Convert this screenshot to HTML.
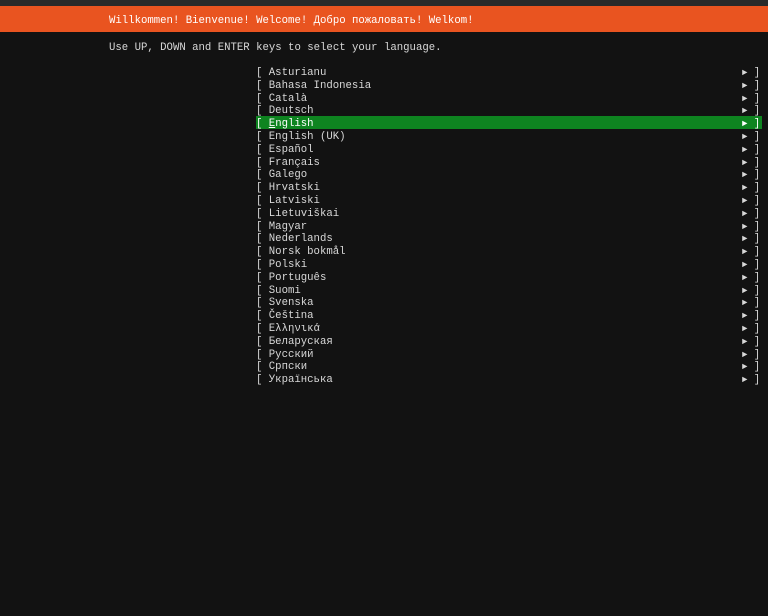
<!DOCTYPE html>
<html><head><meta charset="utf-8"><style>
html,body{margin:0;padding:0;width:768px;height:616px;background:#121212;overflow:hidden}
body{position:relative;font-family:"Liberation Mono","DejaVu Sans Mono",monospace;font-size:10.67px;line-height:12.8px;color:#d8d8d8}
.top{position:absolute;left:0;top:0;width:768px;height:6px;background:#2a2a2a}
.bar{position:absolute;left:0;top:6px;width:768px;height:26px;background:#e95420;color:#fff}
.bar span{position:absolute;left:109px;top:9px;white-space:pre}
.t{position:absolute;white-space:pre}
.list{position:absolute;left:256px;top:65px;width:506px}
.row{position:relative;height:12.8px;white-space:pre;padding-top:0}
.row .in{position:relative;top:2px}
.row .r{position:absolute;left:486px;top:2px}
.row .r b{font-weight:normal;font-size:9px}
.sel{background:#0e8420;color:#fff}
</style></head><body>
<div class="top"></div>
<div class="bar"><span>Willkommen! Bienvenue! Welcome! Добро пожаловать! Welkom!</span></div>
<div class="t" style="left:109px;top:41.5px">Use UP, DOWN and ENTER keys to select your language.</div>
<div class="list">
<div class="row"><span class="in">[ Asturianu</span><span class="r"><b>►</b> ]</span></div>
<div class="row"><span class="in">[ Bahasa Indonesia</span><span class="r"><b>►</b> ]</span></div>
<div class="row"><span class="in">[ Català</span><span class="r"><b>►</b> ]</span></div>
<div class="row"><span class="in">[ Deutsch</span><span class="r"><b>►</b> ]</span></div>
<div class="row sel"><span class="in">[ <u>E</u>nglish</span><span class="r"><b>►</b> ]</span></div>
<div class="row"><span class="in">[ English (UK)</span><span class="r"><b>►</b> ]</span></div>
<div class="row"><span class="in">[ Español</span><span class="r"><b>►</b> ]</span></div>
<div class="row"><span class="in">[ Français</span><span class="r"><b>►</b> ]</span></div>
<div class="row"><span class="in">[ Galego</span><span class="r"><b>►</b> ]</span></div>
<div class="row"><span class="in">[ Hrvatski</span><span class="r"><b>►</b> ]</span></div>
<div class="row"><span class="in">[ Latviski</span><span class="r"><b>►</b> ]</span></div>
<div class="row"><span class="in">[ Lietuviškai</span><span class="r"><b>►</b> ]</span></div>
<div class="row"><span class="in">[ Magyar</span><span class="r"><b>►</b> ]</span></div>
<div class="row"><span class="in">[ Nederlands</span><span class="r"><b>►</b> ]</span></div>
<div class="row"><span class="in">[ Norsk bokmål</span><span class="r"><b>►</b> ]</span></div>
<div class="row"><span class="in">[ Polski</span><span class="r"><b>►</b> ]</span></div>
<div class="row"><span class="in">[ Português</span><span class="r"><b>►</b> ]</span></div>
<div class="row"><span class="in">[ Suomi</span><span class="r"><b>►</b> ]</span></div>
<div class="row"><span class="in">[ Svenska</span><span class="r"><b>►</b> ]</span></div>
<div class="row"><span class="in">[ Čeština</span><span class="r"><b>►</b> ]</span></div>
<div class="row"><span class="in">[ Ελληνικά</span><span class="r"><b>►</b> ]</span></div>
<div class="row"><span class="in">[ Беларуская</span><span class="r"><b>►</b> ]</span></div>
<div class="row"><span class="in">[ Русский</span><span class="r"><b>►</b> ]</span></div>
<div class="row"><span class="in">[ Српски</span><span class="r"><b>►</b> ]</span></div>
<div class="row"><span class="in">[ Українська</span><span class="r"><b>►</b> ]</span></div>
</div>
</body></html>
